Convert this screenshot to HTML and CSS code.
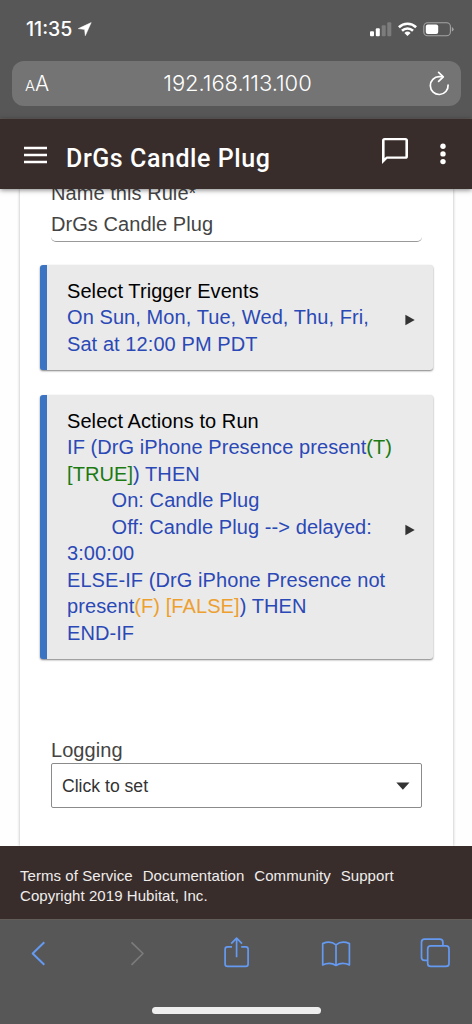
FILE: index.html
```html
<!DOCTYPE html>
<html lang="en">
<head>
<meta charset="utf-8">
<title>DrGs Candle Plug</title>
<link rel="stylesheet" href="styles.css">
</head>
<body>
<div class="phone">
  <div class="browser-top">
    <div class="status">
      <span class="time">11:35</span>
      <svg class="location" width="14" height="14" viewBox="0 0 14 14"><path d="M13.2.6.3 6.6l6.3.9.7 6.2z" fill="#fff" stroke="#fff" stroke-width=".5" stroke-linejoin="round"/></svg>
      <svg class="signals" width="86" height="16" viewBox="0 0 86 16">
        <g fill="#fff"><rect x="1" y="9.3" width="4" height="5" rx="1"/><rect x="6.8" y="6.3" width="4" height="8" rx="1"/></g>
        <g fill="#7c7c7c"><rect x="12.7" y="3.3" width="4" height="11" rx="1"/><rect x="18.3" y=".3" width="4" height="14" rx="1"/></g>
        <g fill="none" stroke="#fff" stroke-width="2.6"><path d="M29.9 5.2a12.5 12.5 0 0 1 17.2 0"/><path d="M33 8.7a8 8 0 0 1 11 0"/></g>
        <path d="M35.4 10.9a4.5 4.5 0 0 1 6.2 0l-3.1 3.2z" fill="#fff"/>
        <rect x="54.8" y=".8" width="26.6" height="13" rx="3.8" fill="none" stroke="#a4a4a4" stroke-width="1.1"/>
        <rect x="56.8" y="2.5" width="12.4" height="9.6" rx="2" fill="#fff"/>
        <path d="M82.8 5v4.6q1.8-.7 1.8-2.3t-1.8-2.3" fill="#a4a4a4"/>
      </svg>
    </div>
    <div class="address">
      <span class="reader"><small>A</small>A</span>
      <span class="url">192.168.113.100</span>
      <svg class="reload" width="22" height="26" viewBox="0 0 22 26"><g fill="none" stroke="#fff" stroke-width="1.7" stroke-linecap="round" stroke-linejoin="round"><path d="M14.4 5.7h-3.2A8.9 8.9 0 1 0 20.1 14"/><path d="M10.6 1.4l4.7 4.4-4.7 4.6"/></g></svg>
    </div>
  </div>

  <header class="app-bar">
    <svg class="menu" width="24" height="18" viewBox="0 0 24 18"><path d="M0 2h23M0 9h23M0 16h23" stroke="#fff" stroke-width="2.3"/></svg>
    <h1>DrGs Candle Plug</h1>
    <svg class="chat" width="26" height="26" viewBox="0 0 26 26"><path fill="#fff" fill-rule="evenodd" d="M2.6 0h20.8Q26 0 26 2.6v15.6q0 2.6-2.6 2.6H5.2L0 26V2.6Q0 0 2.6 0zm0 2.3V20l2-1.6h18.8V2.3z"/></svg>
    <svg class="more" width="6" height="22" viewBox="0 0 6 22"><g fill="#fff"><circle cx="3" cy="3.3" r="2.7"/><circle cx="3" cy="10.9" r="2.7"/><circle cx="3" cy="18.6" r="2.7"/></g></svg>
  </header>

  <main class="page">
    <section class="sheet">
      <label class="name-label">Name this Rule*</label>
      <div class="name-input">DrGs Candle Plug</div>

      <div class="tile">
        <div class="tile-text">
          <div class="tile-title">Select Trigger Events</div>
          <div>On Sun, Mon, Tue, Wed, Thu, Fri,</div>
          <div>Sat at 12:00 PM PDT</div>
        </div>
        <svg class="arrow" width="10" height="12" viewBox="0 0 10 12"><path d="M.4.8v10.4L9.7 6z" fill="#333"/></svg>
      </div>

      <div class="tile">
        <div class="tile-text">
          <div class="tile-title">Select Actions to Run</div>
          <div>IF (DrG iPhone Presence present<span class="true">(T)</span></div>
          <div><span class="true">[TRUE]</span>) THEN</div>
          <div class="indent">On: Candle Plug</div>
          <div class="indent">Off: Candle Plug --&gt; delayed:</div>
          <div>3:00:00</div>
          <div>ELSE-IF (DrG iPhone Presence not</div>
          <div>present<span class="false">(F) [FALSE]</span>) THEN</div>
          <div>END-IF</div>
        </div>
        <svg class="arrow" width="10" height="12" viewBox="0 0 10 12"><path d="M.4.8v10.4L9.7 6z" fill="#333"/></svg>
      </div>

      <label class="logging-label">Logging</label>
      <div class="select">
        <span>Click to set</span>
        <svg width="14" height="8" viewBox="0 0 14 8"><path d="M.3.4h13.2L6.9 7.7z" fill="#333"/></svg>
      </div>
    </section>
  </main>

  <footer class="footer">
    <div class="links"><span>Terms of Service</span><span>Documentation</span><span>Community</span><span>Support</span></div>
    <div class="copyright">Copyright 2019 Hubitat, Inc.</div>
  </footer>

  <nav class="toolbar">
    <svg width="472" height="60" viewBox="0 .7 472 60" fill="none" stroke="#659af2" stroke-width="1.7" stroke-linejoin="round">
      <path d="M44.3 23 32.7 34.2l11.6 11.3" stroke-width="2"/>
      <path d="M131.5 23 143 34.2l-11.5 11.3" stroke="#7b7b7b" stroke-width="1.7"/>
      <path d="M232 27.5h-4.5q-2.4 0-2.4 2.4v14.8q0 2.4 2.4 2.4h18.2q2.4 0 2.4-2.4V29.9q0-2.4-2.4-2.4h-4.5M236.6 38V19.5M231.2 24.3l5.4-5.4 5.4 5.4"/>
      <path d="M336 25.5q-5.8-4.5-13.3-1.2v21.3q7.5-3.3 13.3.6 5.8-3.9 13.4-.6V24.3q-7.6-3.3-13.4 1.2zv20.7"/>
      <path d="M427.5 41.1h-2.8q-3.2 0-3.2-3.2V23.1q0-3.2 3.2-3.2h15q3.2 0 3.2 3.2v3.5"/>
      <rect x="427.7" y="26.6" width="21.3" height="20.5" rx="3"/>
    </svg>
    <div class="home"></div>
  </nav>
</div>
</body>
</html>
```
FILE: styles.css
```css
* { box-sizing: border-box; }
body { margin: 0; background: #fff; font-family: "Liberation Sans", Arial, sans-serif; }
svg { display: block; flex: none; }
.phone { width: 472px; height: 1024px; overflow: hidden; display: flex; flex-direction: column; }

.browser-top { height: 119px; flex: none; background: #575757; color: #fff; font-family: Inter, sans-serif; border-bottom: 1px solid #625c5b; }
.status { height: 61px; padding: 19px 16px 0 26px; display: flex; align-items: flex-start; }
.time { font-size: 19.5px; line-height: 21px; font-weight: 500; width: 51px; white-space: nowrap; letter-spacing: 0; }
.location { margin: 3px 0 0 1px; }
.signals { margin: 3px 1px 0 auto; width: 86px; }
.address { height: 45px; margin: 0 11px 0 12px; border-radius: 12px; background: #747474; display: flex; align-items: center; padding: 0 11px 0 13px; }
.reader { width: 60px; font-size: 21px; line-height: 28px; padding-top: 3px; font-weight: 300; }
.reader small { font-size: 15px; }
.url { flex: 1; text-align: center; font-size: 22px; line-height: 28px; letter-spacing: -.05px; margin-top: -1px; font-weight: 300; }
.reload { margin: 0 0 0 38px; }

.app-bar { height: 70px; flex: none; position: relative; z-index: 1; background: #382d2b; box-shadow: 0 1px 5px rgba(0,0,0,.5); display: flex; align-items: flex-start; padding: 0 26px 0 24px; color: #fff; }
.menu { margin-top: 27px; }
.app-bar h1 { margin: 24px 0 0 18px; font: 500 25px/32px Roboto, sans-serif; letter-spacing: .56px; white-space: nowrap; }
.chat { margin: 19px 32px 0 auto; }
.more { margin-top: 24px; }

.page { height: 657px; flex: none; padding: 0 19px 0 20px; background: #fefefe; }
.sheet { height: 657px; padding: 0 20px; background: #fff; box-shadow: 0 0 3px rgba(0,0,0,.3); display: flex; flex-direction: column; }
.name-label, .name-input, .logging-label { margin-left: 11px; margin-right: 11px; font-size: 20px; letter-spacing: .06px; color: #444; }
.name-label { height: 22px; line-height: 22px; margin-top: -7px; }
.name-input { height: 38px; line-height: 40px; border-bottom: 1px solid #999; border-radius: 0 0 5px 5px; margin-bottom: 23px; }

.tile { display: flex; align-items: center; justify-content: space-between; background: #eaeaea; border-left: 7px solid #3b74c3; border-radius: 3px; padding: 12.5px 18px 13px 20px; margin-bottom: 25px; box-shadow: 0 1px 2px rgba(0,0,0,.5); }
.tile + .tile { margin-bottom: 0; }
.tile-text { font-size: 20px; line-height: 26.5px; letter-spacing: .08px; color: #2a49b6; white-space: nowrap; }
.tile-title { color: #000; }
.indent { padding-left: 44.5px; }
.true { color: #1b7a12; }
.false { color: #eda02f; }
.arrow { margin-top: 6px; }

.logging-label { margin-top: 78px; line-height: 26px; }
.select { height: 45px; margin: 0 11px; border: 1px solid #8b8b8b; border-radius: 2px; display: flex; align-items: center; justify-content: space-between; padding: 1px 11px 0 10px; font-size: 17.6px; color: #333; }

.footer { height: 73px; flex: none; background: #382d2b; color: #f0eeed; padding: 20px; font-size: 15px; letter-spacing: .06px; line-height: 20px; white-space: nowrap; }
.links { display: flex; gap: 10px; }

.toolbar { height: 105px; flex: none; background: #575757; border-top: 1px solid #625c5b; display: flex; flex-direction: column; align-items: center; }
.home { width: 169px; height: 7px; border-radius: 4px; background: #eee; margin: 27px 0 0 1px; }
```
